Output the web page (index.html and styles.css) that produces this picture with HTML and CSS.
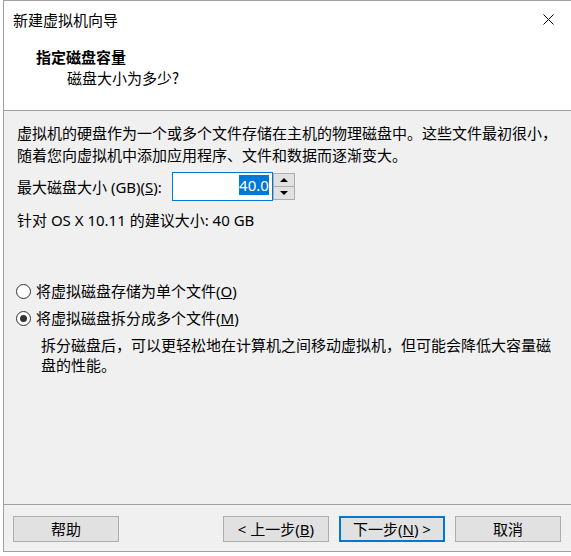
FILE: index.html
```html
<!DOCTYPE html>
<html lang="zh-CN">
<head>
<meta charset="UTF-8">
<title>新建虚拟机向导</title>
<link rel="stylesheet" href="styles.css">
</head>
<body>

<div class="window">
    <div class="titlebar">
        <span class="title">新建虚拟机向导</span>
        <span class="close">
            <svg width="11" height="11" viewBox="0 0 11 11"><path d="M0.5 0.5 L10.5 10.5 M10.5 0.5 L0.5 10.5" stroke="#000" stroke-width="1" fill="none"/></svg>
        </span>
    </div>

    <div class="header">
        <div class="heading">指定磁盘容量</div>
        <div class="subheading">磁盘大小为多少?</div>
    </div>

    <div class="content">
        <p class="intro">虚拟机的硬盘作为一个或多个文件存储在主机的物理磁盘中。这些文件最初很小，<br>随着您向虚拟机中添加应用程序、文件和数据而逐渐变大。</p>

        <div class="size-row">
            <label class="size-label">最大磁盘大小 (GB)(<u>S</u>):</label>
            <div class="spin">
                <div class="spin-input"><span class="selected">40.0</span></div>
                <div class="spin-btns">
                    <div class="spin-btn"><span class="arrow-up"></span></div>
                    <div class="spin-btn"><span class="arrow-down"></span></div>
                </div>
            </div>
        </div>

        <div class="hint">针对 OS X 10.11 的建议大小: 40 GB</div>

        <div class="radio-row first">
            <span class="radio"></span>
            <span>将虚拟磁盘存储为单个文件(<u>O</u>)</span>
        </div>
        <div class="radio-row">
            <span class="radio checked"></span>
            <span>将虚拟磁盘拆分成多个文件(<u>M</u>)</span>
        </div>
        <p class="radio-desc">拆分磁盘后，可以更轻松地在计算机之间移动虚拟机，但可能会降低大容量磁<br>盘的性能。</p>
    </div>

    <div class="footer">
        <button class="btn">帮助</button>
        <div class="nav-btns">
            <button class="btn">&lt; 上一步(<u>B</u>)</button>
            <button class="btn default">下一步(<u>N</u>) &gt;</button>
            <button class="btn">取消</button>
        </div>
    </div>
</div>

</body>
</html>
```

FILE: styles.css
```css
/* Wizard dialog */
body {
    margin: 0;
    background: #ffffff;
    font-family: "Noto Sans", "Noto Sans CJK SC", sans-serif;
    font-size: 15px;
    color: #000;
}

.window {
    margin-left: 3px;
    height: 552px;
    box-sizing: border-box;
    border: 1px solid #a0a0a0;
    border-right: none;
    display: flex;
    flex-direction: column;
    background: #f0f0f0;
}

.titlebar {
    height: 37px;
    background: #fff;
    display: flex;
    align-items: center;
    justify-content: space-between;
    padding: 0 13px 0 9px;
}

.title {
    font-family: "Noto Sans CJK SC", sans-serif;
    line-height: 20px;
}

.close {
    display: flex;
    width: 11px;
    height: 11px;
    margin-right: 4px;
}

.header {
    background: #fff;
    padding: 9px 0 22px 32px;
    border-bottom: 1px solid #a0a0a0;
}

.heading {
    font-family: "Noto Sans CJK SC", sans-serif;
    font-weight: bold;
    line-height: 20px;
}

.subheading {
    font-family: "Noto Sans CJK SC", sans-serif;
    line-height: 21px;
    padding-left: 31px;
}

.content {
    flex: 1;
    padding: 11px 0 0 12px;
}

.intro {
    margin: 0;
    line-height: 22px;
    white-space: nowrap;
    padding-left: 1px;
}

.size-row {
    display: flex;
    align-items: center;
    margin-top: 6px;
    padding-left: 1px;
}

.size-label {
    margin-right: 10px;
}

.spin {
    display: flex;
    height: 29px;
}

.spin-input {
    width: 101px;
    box-sizing: border-box;
    border: 1px solid #0078d7;
    background: #fff;
    text-align: right;
    padding: 2px 3px 0 0;
    line-height: 20px;
}

.selected {
    background: #0078d7;
    color: #fff;
    display: inline-block;
}

.spin-btns {
    width: 22px;
    display: flex;
    flex-direction: column;
    padding: 1px 0;
    box-sizing: border-box;
}

.spin-btn {
    flex: 1;
    border: 1px solid #adadad;
    background: #e1e1e1;
    display: flex;
    align-items: center;
    justify-content: center;
}

.spin-btn + .spin-btn {
    border-top: none;
}

.arrow-up {
    width: 0;
    height: 0;
    border-left: 4px solid transparent;
    border-right: 4px solid transparent;
    border-bottom: 4px solid #000;
}

.arrow-down {
    width: 0;
    height: 0;
    border-left: 4px solid transparent;
    border-right: 4px solid transparent;
    border-top: 4px solid #000;
}

.hint {
    margin-top: 9px;
    line-height: 20px;
    padding-left: 1px;
}

.radio-row {
    display: flex;
    align-items: center;
    gap: 5px;
    line-height: 20px;
    margin-top: 7px;
}

.radio-row.first {
    margin-top: 51px;
}

.radio {
    width: 15px;
    height: 15px;
    box-sizing: border-box;
    border: 1px solid #333;
    border-radius: 50%;
    background: #fff;
    display: flex;
    align-items: center;
    justify-content: center;
}

.radio.checked::after {
    content: "";
    width: 7px;
    height: 7px;
    border-radius: 50%;
    background: #333;
}

.radio-desc {
    margin: 7px 0 0 25px;
    line-height: 20px;
    white-space: nowrap;
}

.footer {
    border-top: 1px solid #a0a0a0;
    padding: 11px 10px 9px 9px;
    display: flex;
    justify-content: space-between;
}

.nav-btns {
    display: flex;
    gap: 10px;
}

.btn {
    width: 106px;
    height: 26px;
    box-sizing: border-box;
    border: 1px solid #adadad;
    background: #e1e1e1;
    font-family: "Noto Sans", "Noto Sans CJK SC", sans-serif;
    font-size: 15px;
    color: #000;
    padding: 0;
    line-height: 22px;
}

.btn.default {
    border: 2px solid #0078d7;
}
```
